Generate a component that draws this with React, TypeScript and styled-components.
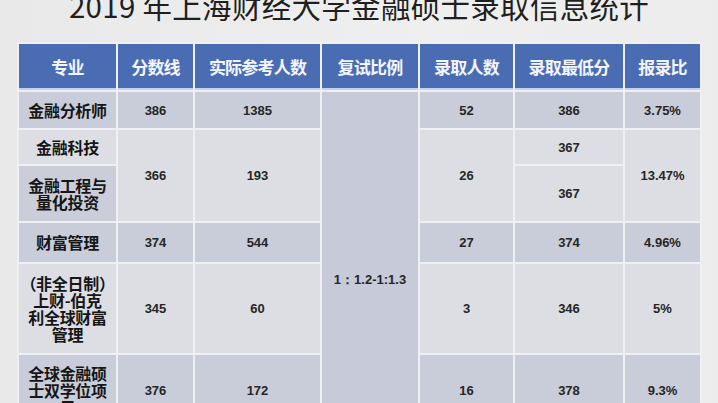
import React from "react";
import styled, { createGlobalStyle } from "styled-components";

const GlobalStyle = createGlobalStyle`
  html, body {
    margin: 0;
    padding: 0;
    background: #ebebeb;
    overflow: hidden;
  }
  body {
    font-family: "Noto Sans CJK SC", "Noto Sans", sans-serif;
  }
`;

type Tone = "dark" | "light" | "mid" | "ratio";

const tones: Record<Tone, string> = {
  dark: "#c9ccd9",
  light: "#dcdee4",
  mid: "#cbced9",
  ratio: "#c6cad9",
};

const Page = styled.div`
  width: 718px;
  height: 403px;
  overflow: hidden;
  background: linear-gradient(90deg, #e9e9e9 0%, #efefef 60%, #ececec 100%);
`;

const Title = styled.h1`
  margin: -9px 0 0;
  height: 51px;
  font-family: "Noto Sans CJK SC", "Noto Sans", sans-serif;
  font-weight: 400;
  font-size: 29.5px;
  line-height: 29px;
  color: #1f1f1f;
  text-align: center;
  letter-spacing: 0.3px;
`;

const Table = styled.table`
  margin-left: 17px;
  width: 685px;
  table-layout: fixed;
  border-collapse: separate;
  border-spacing: 2px;
  background: #eef0f3;
`;

const Head = styled.th`
  height: 44px;
  padding: 0;
  background: #4a6cb3;
  border-bottom: 2px solid #c2d3ef;
  color: #f3f5fb;
  font-family: "Noto Sans CJK SC", sans-serif;
  font-weight: 700;
  font-size: 17px;
  letter-spacing: -0.8px;
  text-align: center;
`;

const Row = styled.tr<{ $h: number }>`
  height: ${(p) => p.$h}px;
`;

const Name = styled.td<{ $tone: Tone }>`
  padding: 0;
  background: ${(p) => tones[p.$tone]};
  color: #161616;
  font-family: "Noto Sans CJK SC", sans-serif;
  font-weight: 700;
  font-size: 16px;
  line-height: 17px;
  letter-spacing: -0.3px;
  text-align: center;
  vertical-align: middle;
`;

const Num = styled.td<{ $tone: Tone }>`
  padding: 0;
  background: ${(p) => tones[p.$tone]};
  color: #262626;
  font-family: "Liberation Sans", Arial, sans-serif;
  font-weight: 700;
  font-size: 13px;
  text-align: center;
  vertical-align: middle;
`;

const cols = [97, 75, 125, 96, 93, 108, 75];
const heads = ["专业", "分数线", "实际参考人数", "复试比例", "录取人数", "录取最低分", "报录比"];

export default function App() {
  return (
    <Page>
      <GlobalStyle />
      <Title>2019 年上海财经大学金融硕士录取信息统计</Title>
      <Table>
        <colgroup>
          {cols.map((w, i) => (
            <col key={i} style={{ width: w }} />
          ))}
        </colgroup>
        <thead>
          <tr>
            {heads.map((h) => (
              <Head key={h}>{h}</Head>
            ))}
          </tr>
        </thead>
        <tbody>
          <Row $h={36}>
            <Name $tone="dark">金融分析师</Name>
            <Num $tone="dark">386</Num>
            <Num $tone="dark">1385</Num>
            <Num $tone="ratio" rowSpan={7}>
              1：1.2-1:1.3
            </Num>
            <Num $tone="dark">52</Num>
            <Num $tone="dark">386</Num>
            <Num $tone="dark">3.75%</Num>
          </Row>
          <Row $h={34}>
            <Name $tone="light">金融科技</Name>
            <Num $tone="light" rowSpan={2}>366</Num>
            <Num $tone="light" rowSpan={2}>193</Num>
            <Num $tone="light" rowSpan={2}>26</Num>
            <Num $tone="light">367</Num>
            <Num $tone="light" rowSpan={2}>13.47%</Num>
          </Row>
          <Row $h={55}>
            <Name $tone="mid">
              金融工程与
              <br />
              量化投资
            </Name>
            <Num $tone="light">367</Num>
          </Row>
          <Row $h={39}>
            <Name $tone="dark">财富管理</Name>
            <Num $tone="dark">374</Num>
            <Num $tone="dark">544</Num>
            <Num $tone="dark">27</Num>
            <Num $tone="dark">374</Num>
            <Num $tone="dark">4.96%</Num>
          </Row>
          <Row $h={89}>
            <Name $tone="light">
              （非全日制）
              <br />
              上财-伯克
              <br />
              利全球财富
              <br />
              管理
            </Name>
            <Num $tone="light">345</Num>
            <Num $tone="light">60</Num>
            <Num $tone="light">3</Num>
            <Num $tone="light">346</Num>
            <Num $tone="light">5%</Num>
          </Row>
          <Row $h={70}>
            <Name $tone="dark">
              全球金融硕
              <br />
              士双学位项
              <br />
              目
            </Name>
            <Num $tone="dark">376</Num>
            <Num $tone="dark">172</Num>
            <Num $tone="dark">16</Num>
            <Num $tone="dark">378</Num>
            <Num $tone="dark">9.3%</Num>
          </Row>
          <Row $h={40}>
            <Name $tone="light" />
            <Num $tone="light" />
            <Num $tone="light" />
            <Num $tone="light" />
            <Num $tone="light" />
            <Num $tone="light" />
          </Row>
        </tbody>
      </Table>
    </Page>
  );
}
